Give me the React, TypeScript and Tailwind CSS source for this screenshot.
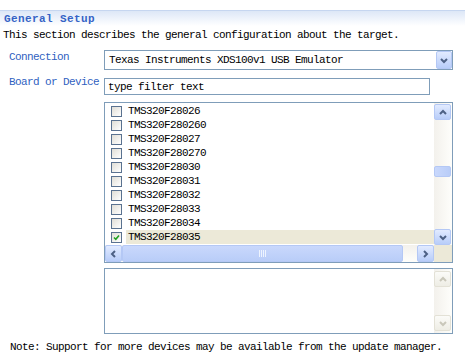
import React from "react";

const devices = [
  "TMS320F28026",
  "TMS320F280260",
  "TMS320F28027",
  "TMS320F280270",
  "TMS320F28030",
  "TMS320F28031",
  "TMS320F28032",
  "TMS320F28033",
  "TMS320F28034",
  "TMS320F28035",
];

const mono = "font-['Liberation_Mono',monospace] text-[11px] tracking-[-0.6px]";

function Arrow({ dir, disabled }: { dir: "up" | "down" | "left" | "right"; disabled?: boolean }) {
  const d = {
    up: "M2 6 L5 3 L8 6",
    down: "M2 3 L5 6 L8 3",
    left: "M6 2 L3 5 L6 8",
    right: "M3 2 L6 5 L3 8",
  }[dir];
  return (
    <svg width="10" height="9" viewBox="0 0 10 9">
      <path d={d} fill="none" stroke={disabled ? "#c9c7ba" : "#4d6185"} strokeWidth="2" />
    </svg>
  );
}

function ScrollBtn({ dir, disabled }: { dir: "up" | "down" | "left" | "right"; disabled?: boolean }) {
  return (
    <div
      className={`flex items-center justify-center rounded-[2px] border ${
        disabled
          ? "border-[#e3e1d6] bg-gradient-to-b from-[#fbfbf8] to-[#eeede5]"
          : "border-[#b4c8f5] bg-gradient-to-b from-[#e2ebff] to-[#b8cdf9]"
      } ${dir === "up" || dir === "down" ? "h-[16px] w-full" : "h-full w-[17px]"}`}
    >
      <Arrow dir={dir} disabled={disabled} />
    </div>
  );
}

function Checkbox({ checked }: { checked?: boolean }) {
  return (
    <div className="flex h-[11px] w-[11px] items-center justify-center border border-[#5a7290] bg-gradient-to-br from-[#e0ded6] to-white">
      {checked && (
        <svg width="7" height="7" viewBox="0 0 7 7">
          <path d="M1 3.5 L2.8 5.3 L6 1.5" fill="none" stroke="#21a121" strokeWidth="1.6" />
        </svg>
      )}
    </div>
  );
}

export default function App() {
  return (
    <div className={`h-[356px] w-[465px] bg-white text-black ${mono}`}>
      <div className="h-[10px]" />
      <div className="h-[16px] border-t border-[#c6d6f0] bg-gradient-to-b from-[#dde7f7] to-white pl-[4px] leading-[17px]">
        <span className="font-bold tracking-[0.4px] text-[#3563c6]">General Setup</span>
      </div>
      <div className="mt-[2px] pl-[3px] leading-[14px]">This section describes the general configuration about the target.</div>

      <div className="mt-[8px] flex">
        <div className="w-[104px] pl-[9px] leading-[14px] text-[#2f5fbf]">Connection</div>
        <div className="flex h-[20px] w-[349px] items-stretch border border-[#7f9db9] bg-white">
          <div className="flex-1 pl-[4px] leading-[19px]">Texas Instruments XDS100v1 USB Emulator</div>
          <div className="flex w-[16px] items-center justify-center rounded-[2px] border border-[#b4c8f5] bg-gradient-to-b from-[#e2ebff] to-[#b8cdf9]">
            <Arrow dir="down" />
          </div>
        </div>
      </div>

      <div className="mt-[8px] flex">
        <div className="w-[104px] pl-[9px] leading-[8px] text-[#2f5fbf]">Board or Device</div>
        <div className="h-[17px] w-[326px] border border-[#7f9db9] pl-[3px] leading-[16px]">type filter text</div>
      </div>

      <div className="ml-[104px] mt-[7px] flex h-[161px] w-[349px] flex-col border border-[#7f9db9] bg-white">
        <div className="flex h-[142px]">
          <div className="flex-1 pt-[1px]">
            {devices.map((d, i) => (
              <div key={d} className="flex h-[14px] items-center">
                <div className="ml-[6px] mr-[4px]">
                  <Checkbox checked={i === 9} />
                </div>
                <div className={`flex h-full flex-1 items-center pl-[2px] ${i === 9 ? "bg-[#ece9d8]" : ""}`}>{d}</div>
              </div>
            ))}
          </div>
          <div className="flex w-[18px] flex-col bg-gradient-to-r from-[#f3f1ec] to-[#fefefb] pr-[1px]">
            <div className="mt-[1px]">
              <ScrollBtn dir="up" />
            </div>
            <div className="flex-1">
              <div className="mt-[46px] h-[11px] rounded-[2px] border border-[#b4c8f5] bg-gradient-to-r from-[#c9d8fc] to-[#b9cdf8]" />
            </div>
            <ScrollBtn dir="down" />
          </div>
        </div>
        <div className="flex h-[17px]">
          <div className="flex flex-1 bg-gradient-to-b from-[#f3f1ec] to-[#fefefb]">
            <ScrollBtn dir="left" />
            <div className="flex w-[281px] items-center justify-center rounded-[2px] border border-[#b4c8f5] bg-gradient-to-b from-[#c9d8fc] to-[#b9cdf8]">
              <div className="flex gap-[1px]">
                <div className="h-[7px] w-[1px] bg-[#eef4fe]" />
                <div className="h-[7px] w-[1px] bg-[#eef4fe]" />
                <div className="h-[7px] w-[1px] bg-[#eef4fe]" />
                <div className="h-[7px] w-[1px] bg-[#eef4fe]" />
              </div>
            </div>
            <div className="flex-1" />
            <ScrollBtn dir="right" />
          </div>
          <div className="w-[18px] bg-[#ece9d8]" />
        </div>
      </div>

      <div className="ml-[104px] mt-[5px] flex h-[66px] w-[349px] justify-end border border-[#7f9db9] bg-white">
        <div className="flex w-[18px] flex-col justify-between bg-gradient-to-r from-[#f3f1ec] to-[#fefefb] py-[2px] pr-[1px]">
          <ScrollBtn dir="up" disabled />
          <ScrollBtn dir="down" disabled />
        </div>
      </div>

      <div className="mt-[6px] pl-[10px] leading-[14px]">Note: Support for more devices may be available from the update manager.</div>
    </div>
  );
}
